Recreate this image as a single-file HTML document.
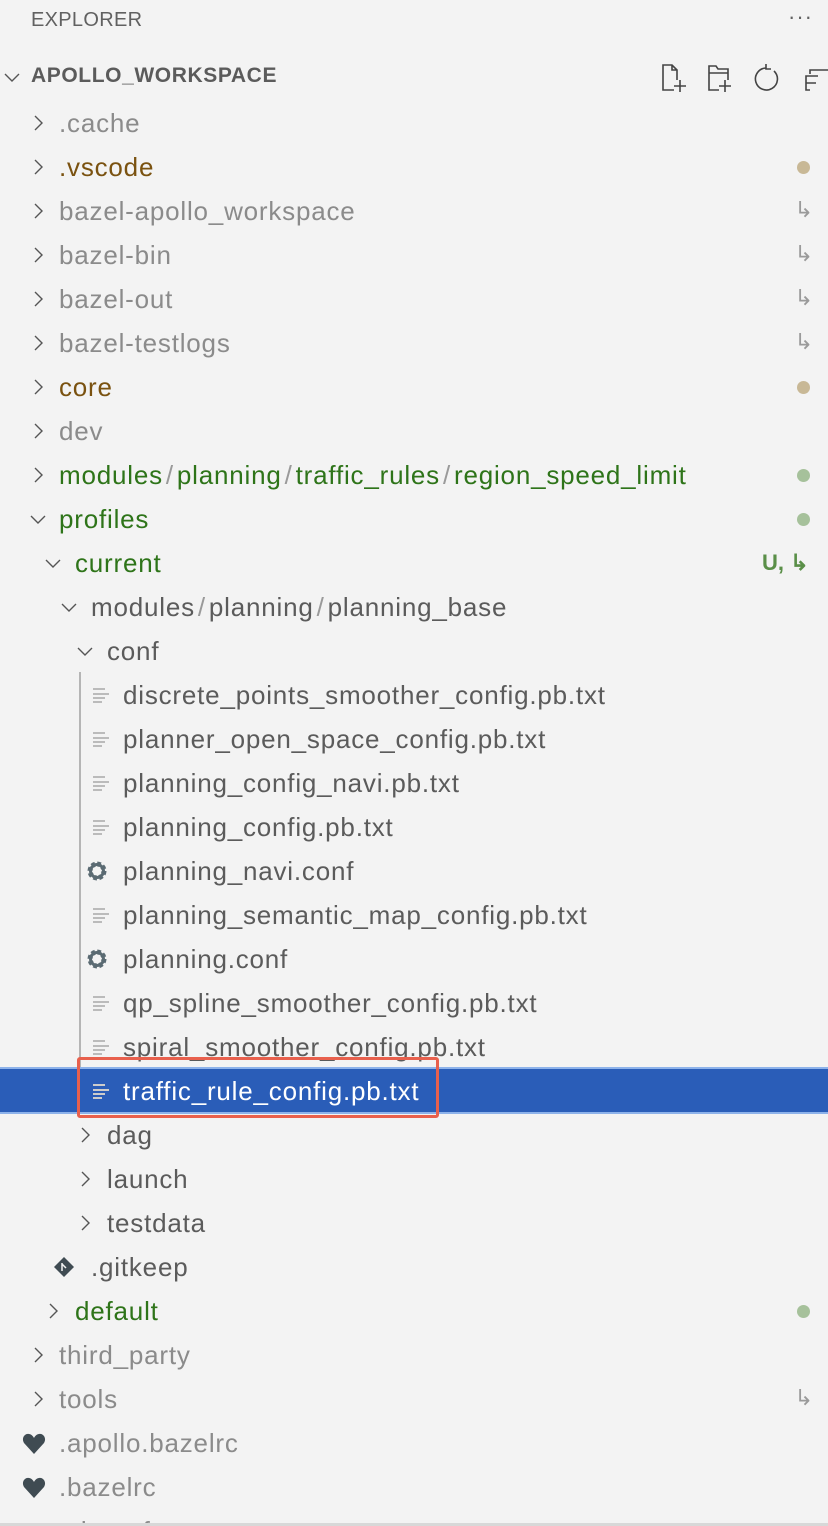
<!DOCTYPE html>
<html style="height:1526px;overflow:hidden"><head><meta charset="utf-8"><style>
body{margin:0;width:828px;height:1526px;background:#f3f3f3;overflow:hidden;position:relative;font-family:"Liberation Sans",sans-serif;}
.r{position:absolute;left:0;width:828px;height:44px;}
.t{position:absolute;top:7px;font-size:26px;line-height:30px;white-space:nowrap;color:#5b5b5b;letter-spacing:0.8px}
.ch{position:absolute;top:12px;width:20px;height:20px;}
.g{color:#8b8b8b}.b{color:#7a5210}.gr{color:#2e7419}
.sep{color:#9a9a9a;margin:0 3px}
.dot{position:absolute;right:18px;top:16px;width:13px;height:13px;border-radius:50%;}
.arr{position:absolute;right:15px;top:8px;font-size:22px;color:#9a9a9a}
.fi{position:absolute;top:13px;}
</style></head><body>
<div style="position:absolute;left:31px;top:9px;font-size:20px;color:#616161;letter-spacing:0.3px">EXPLORER</div>
<div style="position:absolute;left:788px;top:4px;font-size:22px;color:#616161;letter-spacing:1px">···</div>
<svg style="position:absolute;left:2px;top:68px" width="20" height="20" viewBox="0 0 20 20"><path d="M3 6l7 7 7-7" fill="none" stroke="#555" stroke-width="1.4"/></svg>
<div style="position:absolute;left:31px;top:64px;font-size:21px;font-weight:bold;color:#5b5b5b;letter-spacing:0.6px">APOLLO_WORKSPACE</div>
<svg style="position:absolute;left:660px;top:62px" width="168" height="32" viewBox="0 0 168 32" fill="none" stroke="#444" stroke-width="1.6">
<path d="M14 28H3V3h9l5 5v10M12 3v5h5M20 18v12M14 24h12"/>
<path d="M59 28H49V4h7l2 3h10v11M49 11h19M65 18v12M59 24h12"/>
<path d="M106 6a11 11 0 1 0 8 3M106 2v5h5"/>
<path d="M148 14h10M150 28h-4V14h4M150 12V8h18M146 21h10"/>
</svg>
<div style="position:absolute;left:79px;top:672px;width:2px;height:442px;background:#b5b5b5"></div>

<div class="r" style="top:101px"><svg class="ch" style="left:28px" viewBox="0 0 20 20"><path d="M7 3l7 7-7 7" fill="none" stroke="#555" stroke-width="1.4"/></svg><div class="t g" style="left:59px">.cache</div></div>
<div class="r" style="top:145px"><svg class="ch" style="left:28px" viewBox="0 0 20 20"><path d="M7 3l7 7-7 7" fill="none" stroke="#555" stroke-width="1.4"/></svg><div class="t b" style="left:59px">.vscode</div><div class="dot" style="background:#c8b896"></div></div>
<div class="r" style="top:189px"><svg class="ch" style="left:28px" viewBox="0 0 20 20"><path d="M7 3l7 7-7 7" fill="none" stroke="#555" stroke-width="1.4"/></svg><div class="t g" style="left:59px">bazel-apollo_workspace</div><div class="arr">↳</div></div>
<div class="r" style="top:233px"><svg class="ch" style="left:28px" viewBox="0 0 20 20"><path d="M7 3l7 7-7 7" fill="none" stroke="#555" stroke-width="1.4"/></svg><div class="t g" style="left:59px">bazel-bin</div><div class="arr">↳</div></div>
<div class="r" style="top:277px"><svg class="ch" style="left:28px" viewBox="0 0 20 20"><path d="M7 3l7 7-7 7" fill="none" stroke="#555" stroke-width="1.4"/></svg><div class="t g" style="left:59px">bazel-out</div><div class="arr">↳</div></div>
<div class="r" style="top:321px"><svg class="ch" style="left:28px" viewBox="0 0 20 20"><path d="M7 3l7 7-7 7" fill="none" stroke="#555" stroke-width="1.4"/></svg><div class="t g" style="left:59px">bazel-testlogs</div><div class="arr">↳</div></div>
<div class="r" style="top:365px"><svg class="ch" style="left:28px" viewBox="0 0 20 20"><path d="M7 3l7 7-7 7" fill="none" stroke="#555" stroke-width="1.4"/></svg><div class="t b" style="left:59px">core</div><div class="dot" style="background:#c8b896"></div></div>
<div class="r" style="top:409px"><svg class="ch" style="left:28px" viewBox="0 0 20 20"><path d="M7 3l7 7-7 7" fill="none" stroke="#555" stroke-width="1.4"/></svg><div class="t g" style="left:59px">dev</div></div>
<div class="r" style="top:453px"><svg class="ch" style="left:28px" viewBox="0 0 20 20"><path d="M7 3l7 7-7 7" fill="none" stroke="#555" stroke-width="1.4"/></svg><div class="t gr" style="left:59px">modules<span class="sep">/</span>planning<span class="sep">/</span>traffic_rules<span class="sep">/</span>region_speed_limit</div><div class="dot" style="background:#a6c19b"></div></div>
<div class="r" style="top:497px"><svg class="ch" style="left:28px" viewBox="0 0 20 20"><path d="M3 7l7 7 7-7" fill="none" stroke="#555" stroke-width="1.4"/></svg><div class="t gr" style="left:59px">profiles</div><div class="dot" style="background:#a6c19b"></div></div>
<div class="r" style="top:541px"><svg class="ch" style="left:43px" viewBox="0 0 20 20"><path d="M3 7l7 7 7-7" fill="none" stroke="#555" stroke-width="1.4"/></svg><div class="t gr" style="left:75px">current</div><div class="t" style="left:762px;color:#5a8f48;font-weight:bold;font-size:22px;letter-spacing:0">U, ↳</div></div>
<div class="r" style="top:585px"><svg class="ch" style="left:59px" viewBox="0 0 20 20"><path d="M3 7l7 7 7-7" fill="none" stroke="#555" stroke-width="1.4"/></svg><div class="t" style="left:91px">modules<span class="sep">/</span>planning<span class="sep">/</span>planning_base</div></div>
<div class="r" style="top:629px"><svg class="ch" style="left:75px" viewBox="0 0 20 20"><path d="M3 7l7 7 7-7" fill="none" stroke="#555" stroke-width="1.4"/></svg><div class="t" style="left:107px">conf</div></div>

<div class="r" style="top:673px"><svg class="fi" style="left:92px" width="18" height="18" viewBox="0 0 18 18" stroke="#bbb" stroke-width="2"><path d="M1 3h12M1 8h16M1 12h12M1 16h9"/></svg><div class="t" style="left:123px">discrete_points_smoother_config.pb.txt</div></div>
<div class="r" style="top:717px"><svg class="fi" style="left:92px" width="18" height="18" viewBox="0 0 18 18" stroke="#bbb" stroke-width="2"><path d="M1 3h12M1 8h16M1 12h12M1 16h9"/></svg><div class="t" style="left:123px">planner_open_space_config.pb.txt</div></div>
<div class="r" style="top:761px"><svg class="fi" style="left:92px" width="18" height="18" viewBox="0 0 18 18" stroke="#bbb" stroke-width="2"><path d="M1 3h12M1 8h16M1 12h12M1 16h9"/></svg><div class="t" style="left:123px">planning_config_navi.pb.txt</div></div>
<div class="r" style="top:805px"><svg class="fi" style="left:92px" width="18" height="18" viewBox="0 0 18 18" stroke="#bbb" stroke-width="2"><path d="M1 3h12M1 8h16M1 12h12M1 16h9"/></svg><div class="t" style="left:123px">planning_config.pb.txt</div></div>
<div class="r" style="top:849px"><svg class="fi" style="left:86px;top:11px" width="22" height="22" viewBox="0 0 22 22"><circle cx="11" cy="11" r="7" fill="none" stroke="#5a6a72" stroke-width="5" stroke-dasharray="3.3 2.2"/><circle cx="11" cy="11" r="6.5" fill="none" stroke="#5a6a72" stroke-width="3"/></svg><div class="t" style="left:123px">planning_navi.conf</div></div>
<div class="r" style="top:893px"><svg class="fi" style="left:92px" width="18" height="18" viewBox="0 0 18 18" stroke="#bbb" stroke-width="2"><path d="M1 3h12M1 8h16M1 12h12M1 16h9"/></svg><div class="t" style="left:123px">planning_semantic_map_config.pb.txt</div></div>
<div class="r" style="top:937px"><svg class="fi" style="left:86px;top:11px" width="22" height="22" viewBox="0 0 22 22"><circle cx="11" cy="11" r="7" fill="none" stroke="#5a6a72" stroke-width="5" stroke-dasharray="3.3 2.2"/><circle cx="11" cy="11" r="6.5" fill="none" stroke="#5a6a72" stroke-width="3"/></svg><div class="t" style="left:123px">planning.conf</div></div>
<div class="r" style="top:981px"><svg class="fi" style="left:92px" width="18" height="18" viewBox="0 0 18 18" stroke="#bbb" stroke-width="2"><path d="M1 3h12M1 8h16M1 12h12M1 16h9"/></svg><div class="t" style="left:123px">qp_spline_smoother_config.pb.txt</div></div>
<div class="r" style="top:1025px"><svg class="fi" style="left:92px" width="18" height="18" viewBox="0 0 18 18" stroke="#bbb" stroke-width="2"><path d="M1 3h12M1 8h16M1 12h12M1 16h9"/></svg><div class="t" style="left:123px">spiral_smoother_config.pb.txt</div></div>
<div class="r" style="top:1067px;height:43px;background:#2a5db8;border-top:2px solid #8db2ea;border-bottom:2px solid #8db2ea"><svg class="fi" style="left:92px" width="18" height="18" viewBox="0 0 18 18" stroke="#ccc" stroke-width="2"><path d="M1 3h12M1 8h16M1 12h12M1 16h9"/></svg><div class="t" style="left:123px;color:#fff">traffic_rule_config.pb.txt</div></div>
<div style="position:absolute;left:77px;top:1057px;width:356px;height:55px;border:3px solid #e8604d;border-radius:3px"></div>
<div class="r" style="top:1113px"><svg class="ch" style="left:75px" viewBox="0 0 20 20"><path d="M7 3l7 7-7 7" fill="none" stroke="#555" stroke-width="1.4"/></svg><div class="t" style="left:107px">dag</div></div>
<div class="r" style="top:1157px"><svg class="ch" style="left:75px" viewBox="0 0 20 20"><path d="M7 3l7 7-7 7" fill="none" stroke="#555" stroke-width="1.4"/></svg><div class="t" style="left:107px">launch</div></div>
<div class="r" style="top:1201px"><svg class="ch" style="left:75px" viewBox="0 0 20 20"><path d="M7 3l7 7-7 7" fill="none" stroke="#555" stroke-width="1.4"/></svg><div class="t" style="left:107px">testdata</div></div>
<div class="r" style="top:1245px"><svg class="fi" style="left:53px;top:11px" width="22" height="22" viewBox="0 0 22 22"><path d="M11 1l10 10-10 10L1 11z" fill="#3f4b52"/><path d="M9 7v8M9 8l4 4" stroke="#f3f3f3" stroke-width="1.5"/></svg><div class="t" style="left:91px">.gitkeep</div></div>
<div class="r" style="top:1289px"><svg class="ch" style="left:43px" viewBox="0 0 20 20"><path d="M7 3l7 7-7 7" fill="none" stroke="#555" stroke-width="1.4"/></svg><div class="t gr" style="left:75px">default</div><div class="dot" style="background:#a6c19b"></div></div>
<div class="r" style="top:1333px"><svg class="ch" style="left:28px" viewBox="0 0 20 20"><path d="M7 3l7 7-7 7" fill="none" stroke="#555" stroke-width="1.4"/></svg><div class="t g" style="left:59px">third_party</div></div>
<div class="r" style="top:1377px"><svg class="ch" style="left:28px" viewBox="0 0 20 20"><path d="M7 3l7 7-7 7" fill="none" stroke="#555" stroke-width="1.4"/></svg><div class="t g" style="left:59px">tools</div><div class="arr">↳</div></div>
<div class="r" style="top:1421px"><svg class="fi" style="left:22px;top:12px" width="24" height="22" viewBox="0 0 24 22"><path d="M12 21L2 10C-1 5 3 0 7 1c2 0 4 2 5 4 1-2 3-4 5-4 4-1 8 4 5 9z" fill="#3f4b52"/></svg><div class="t g" style="left:59px">.apollo.bazelrc</div></div>
<div class="r" style="top:1465px"><svg class="fi" style="left:22px;top:12px" width="24" height="22" viewBox="0 0 24 22"><path d="M12 21L2 10C-1 5 3 0 7 1c2 0 4 2 5 4 1-2 3-4 5-4 4-1 8 4 5 9z" fill="#3f4b52"/></svg><div class="t g" style="left:59px">.bazelrc</div></div>
<div class="r" style="top:1509px;height:14px;overflow:hidden"><div class="t g" style="left:59px">.clang-format</div></div>
<div style="position:absolute;left:0;top:1523px;width:828px;height:3px;background:#d8d8d8"></div>
</body></html>
